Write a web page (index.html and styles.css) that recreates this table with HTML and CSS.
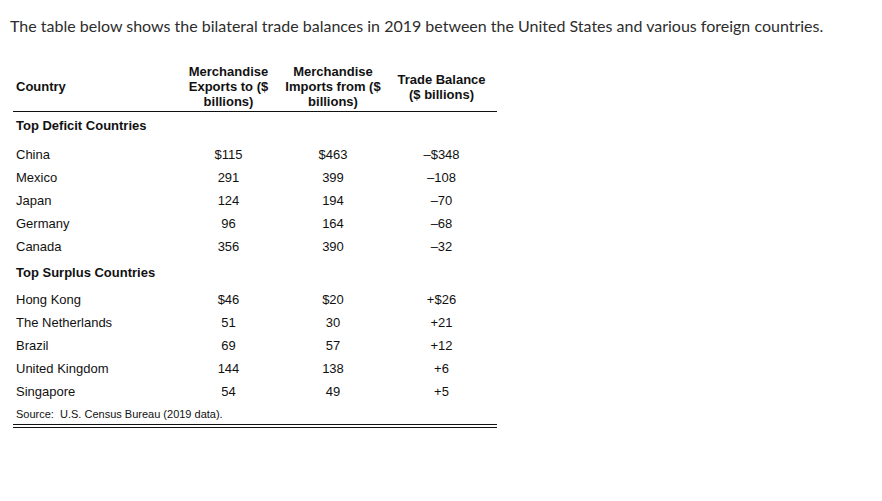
FILE: index.html
```html
<!DOCTYPE html>
<html>
<head>
<meta charset="utf-8">
<link rel="stylesheet" href="styles.css">
</head>
<body>
<p class="intro">The table below shows the bilateral trade balances in 2019 between the United States and various foreign countries.</p>
<table class="trade">
  <colgroup>
    <col class="c-country"><col class="c-exp"><col class="c-imp"><col class="c-bal">
  </colgroup>
  <thead>
    <tr>
      <th class="left">Country</th>
      <th>Merchandise<br>Exports to ($<br>billions)</th>
      <th>Merchandise<br>Imports from ($<br>billions)</th>
      <th>Trade Balance<br>($ billions)</th>
    </tr>
  </thead>
  <tbody>
    <tr class="section first"><td colspan="4">Top Deficit Countries</td></tr>
    <tr><td>China</td><td>$115</td><td>$463</td><td>–$348</td></tr>
    <tr><td>Mexico</td><td>291</td><td>399</td><td>–108</td></tr>
    <tr><td>Japan</td><td>124</td><td>194</td><td>–70</td></tr>
    <tr><td>Germany</td><td>96</td><td>164</td><td>–68</td></tr>
    <tr><td>Canada</td><td>356</td><td>390</td><td>–32</td></tr>
    <tr class="section"><td colspan="4">Top Surplus Countries</td></tr>
    <tr><td>Hong Kong</td><td>$46</td><td>$20</td><td>+$26</td></tr>
    <tr><td>The Netherlands</td><td>51</td><td>30</td><td>+21</td></tr>
    <tr><td>Brazil</td><td>69</td><td>57</td><td>+12</td></tr>
    <tr><td>United Kingdom</td><td>144</td><td>138</td><td>+6</td></tr>
    <tr><td>Singapore</td><td>54</td><td>49</td><td>+5</td></tr>
    <tr class="source"><td colspan="4">Source:&nbsp; U.S. Census Bureau (2019 data).</td></tr>
  </tbody>
</table>
</body>
</html>
```
FILE: styles.css
```css
html, body {
  margin: 0;
  padding: 0;
  background: #fff;
}
body {
  padding: 0 10px;
}
.intro {
  margin: 0;
  padding-top: 16px;
  font-family: Lato, "Open Sans", sans-serif;
  font-size: 16px;
  line-height: 20px;
  color: #2d2d2d;
}
.trade {
  margin-top: 28px;
  margin-left: 3px;
  border-collapse: collapse;
  table-layout: fixed;
  width: 484px;
  font-family: "Liberation Sans", Arial, sans-serif;
  font-size: 13px;
  color: #111;
}
.c-country { width: 164px; }
.c-exp { width: 103px; }
.c-imp { width: 106px; }
.c-bal { width: 111px; }
.trade th {
  font-weight: bold;
  line-height: 15px;
  padding: 0 0 2px;
  vertical-align: middle;
  text-align: center;
  border-bottom: 1.5px solid #111;
}
.trade th.left {
  text-align: left;
  padding-left: 3px;
}
.trade td {
  height: 23px;
  padding: 0;
  line-height: 16px;
  text-align: center;
  vertical-align: middle;
}
.trade td:first-child {
  text-align: left;
  padding-left: 3px;
}
.trade tr.section td {
  height: 30px;
  box-sizing: border-box;
  font-weight: bold;
  padding-top: 6px;
  vertical-align: top;
}
.trade tr.section.first td {
  height: 32px;
}
.trade tr.source td {
  height: 20px;
  font-size: 11px;
  border-bottom: 4px double #111;
}
```
